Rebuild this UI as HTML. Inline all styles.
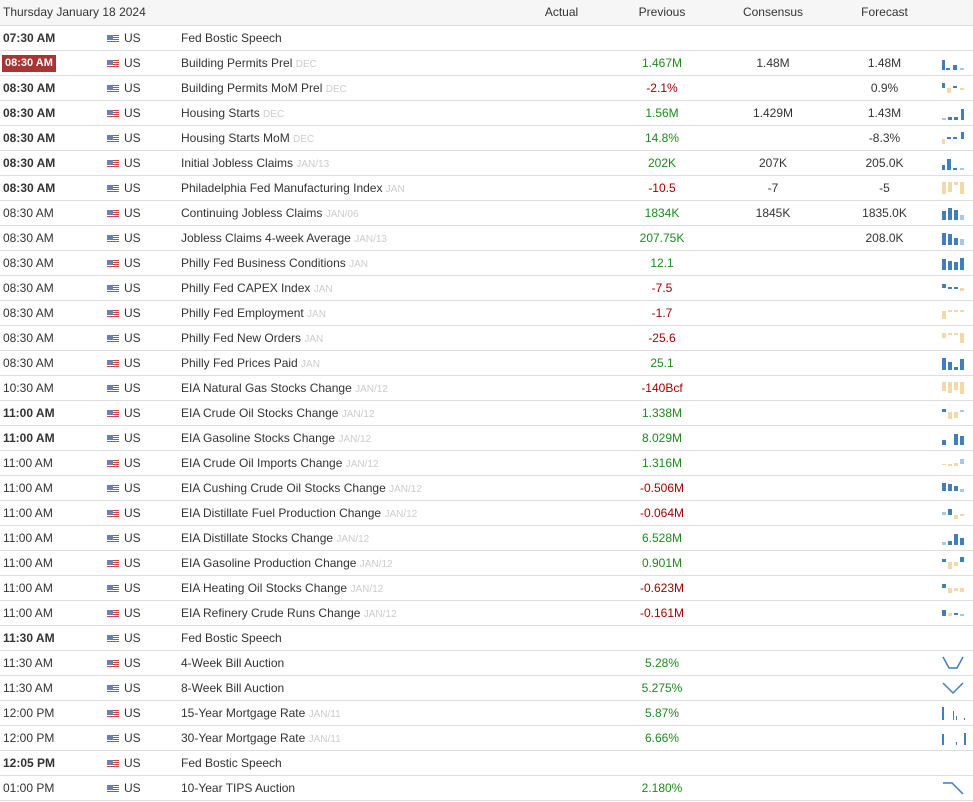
<!DOCTYPE html>
<html><head><style>
body{margin:0;background:#fff;font-family:"Liberation Sans",Arial,sans-serif;font-size:12px;color:#333;width:973px;overflow:hidden}
table{border-collapse:collapse;width:973px;table-layout:fixed}
td{height:24px;padding:0;border-bottom:1px solid #ddd;white-space:nowrap;overflow:hidden}
tr.h td{background:#f6f6f6;color:#333;border-bottom:1px solid #ddd;vertical-align:top;padding-top:5px;height:20px;overflow:visible}
.t{padding-left:3px}
.b{font-weight:bold}
.flag{display:inline-block;width:12px;height:8px;vertical-align:-1px;margin-right:5px;background:repeating-linear-gradient(#c44 0 1px,#fff 1px 2px);position:relative}
.flag:after{content:"";position:absolute;left:0;top:0;width:6px;height:5px;background:#6a7fb6}
.c{text-align:center}
.g{color:#1d8a1d}.r{color:#a30000}
.d{color:#ccc;font-size:10px}
.hl{background:#a33;color:#fff;font-weight:bold;font-size:11px;padding:2px 3px;margin-left:-1px;display:inline-block;line-height:13px}
svg{display:block;margin-left:7px}
</style></head><body>
<table>
<colgroup><col style="width:107px"><col style="width:74px"><col style="width:330px"><col style="width:101px"><col style="width:100px"><col style="width:122px"><col style="width:101px"><col style="width:38px"></colgroup>
<tr class="h"><td class="t">Thursday January 18 2024</td><td></td><td></td><td class="c">Actual</td><td class="c">Previous</td><td class="c">Consensus</td><td class="c">Forecast</td><td></td></tr>
<tr><td class="t b">07:30 AM</td><td><span class="flag"></span>US</td><td>Fed Bostic Speech</td><td></td><td></td><td></td><td></td><td></td></tr>
<tr><td class="t"><span class="hl">08:30 AM</span></td><td><span class="flag"></span>US</td><td>Building Permits Prel <span class="d">DEC</span></td><td></td><td class="c g">1.467M</td><td class="c">1.48M</td><td class="c">1.48M</td><td><svg width="24" height="14"><rect x="0" y="4" width="3" height="10" fill="#3f7fbf"/><rect x="4" y="12" width="4" height="2" fill="#3f7fbf"/><rect x="11" y="9" width="4" height="5" fill="#3f7fbf"/><rect x="18" y="12" width="4" height="2" fill="#aac7e6"/></svg></td></tr>
<tr><td class="t b">08:30 AM</td><td><span class="flag"></span>US</td><td>Building Permits MoM Prel <span class="d">DEC</span></td><td></td><td class="c r">-2.1%</td><td></td><td class="c">0.9%</td><td><svg width="24" height="14"><rect x="0" y="2" width="3" height="5" fill="#3f7fbf"/><rect x="5" y="7" width="4" height="5" fill="#f5d8a8"/><rect x="11" y="5" width="4" height="2" fill="#3f7fbf"/><rect x="18" y="7" width="4" height="2" fill="#f5d8a8"/></svg></td></tr>
<tr><td class="t b">08:30 AM</td><td><span class="flag"></span>US</td><td>Housing Starts <span class="d">DEC</span></td><td></td><td class="c g">1.56M</td><td class="c">1.429M</td><td class="c">1.43M</td><td><svg width="24" height="14"><rect x="0" y="12" width="4" height="2" fill="#aac7e6"/><rect x="6" y="11" width="4" height="3" fill="#3f7fbf"/><rect x="12" y="11" width="4" height="3" fill="#3f7fbf"/><rect x="19" y="3" width="3" height="11" fill="#3f7fbf"/></svg></td></tr>
<tr><td class="t b">08:30 AM</td><td><span class="flag"></span>US</td><td>Housing Starts MoM <span class="d">DEC</span></td><td></td><td class="c g">14.8%</td><td></td><td class="c">-8.3%</td><td><svg width="24" height="14"><rect x="0" y="8" width="3" height="5" fill="#f5d8a8"/><rect x="5" y="6" width="4" height="2" fill="#3f7fbf"/><rect x="11" y="6" width="4" height="2" fill="#3f7fbf"/><rect x="19" y="1" width="3" height="7" fill="#3f7fbf"/></svg></td></tr>
<tr><td class="t b">08:30 AM</td><td><span class="flag"></span>US</td><td>Initial Jobless Claims <span class="d">JAN/13</span></td><td></td><td class="c g">202K</td><td class="c">207K</td><td class="c">205.0K</td><td><svg width="24" height="14"><rect x="0" y="9" width="3" height="5" fill="#3f7fbf"/><rect x="5" y="3" width="4" height="11" fill="#3f7fbf"/><rect x="11" y="12" width="4" height="2" fill="#3f7fbf"/><rect x="18" y="12" width="4" height="2" fill="#aac7e6"/></svg></td></tr>
<tr><td class="t b">08:30 AM</td><td><span class="flag"></span>US</td><td>Philadelphia Fed Manufacturing Index <span class="d">JAN</span></td><td></td><td class="c r">-10.5</td><td class="c">-7</td><td class="c">-5</td><td><svg width="24" height="14"><rect x="0" y="1" width="4" height="12" fill="#f5d8a8"/><rect x="6" y="1" width="4" height="10" fill="#f5d8a8"/><rect x="12" y="1" width="4" height="3" fill="#f5d8a8"/><rect x="18" y="1" width="4" height="12" fill="#f5d8a8"/></svg></td></tr>
<tr><td class="t">08:30 AM</td><td><span class="flag"></span>US</td><td>Continuing Jobless Claims <span class="d">JAN/06</span></td><td></td><td class="c g">1834K</td><td class="c">1845K</td><td class="c">1835.0K</td><td><svg width="24" height="14"><rect x="0" y="5" width="4" height="9" fill="#3f7fbf"/><rect x="6" y="2" width="4" height="12" fill="#3f7fbf"/><rect x="12" y="4" width="4" height="10" fill="#3f7fbf"/><rect x="18" y="9" width="4" height="5" fill="#aac7e6"/></svg></td></tr>
<tr><td class="t">08:30 AM</td><td><span class="flag"></span>US</td><td>Jobless Claims 4-week Average <span class="d">JAN/13</span></td><td></td><td class="c g">207.75K</td><td></td><td class="c">208.0K</td><td><svg width="24" height="14"><rect x="0" y="2" width="4" height="12" fill="#3f7fbf"/><rect x="6" y="3" width="4" height="11" fill="#3f7fbf"/><rect x="12" y="7" width="4" height="7" fill="#3f7fbf"/><rect x="18" y="8" width="4" height="6" fill="#aac7e6"/></svg></td></tr>
<tr><td class="t">08:30 AM</td><td><span class="flag"></span>US</td><td>Philly Fed Business Conditions <span class="d">JAN</span></td><td></td><td class="c g">12.1</td><td></td><td></td><td><svg width="24" height="14"><rect x="0" y="3" width="4" height="11" fill="#3f7fbf"/><rect x="6" y="5" width="4" height="9" fill="#3f7fbf"/><rect x="12" y="6" width="4" height="8" fill="#3f7fbf"/><rect x="18" y="2" width="4" height="12" fill="#3f7fbf"/></svg></td></tr>
<tr><td class="t">08:30 AM</td><td><span class="flag"></span>US</td><td>Philly Fed CAPEX Index <span class="d">JAN</span></td><td></td><td class="c r">-7.5</td><td></td><td></td><td><svg width="24" height="14"><rect x="0" y="3" width="4" height="4" fill="#3f7fbf"/><rect x="6" y="6" width="4" height="2" fill="#3f7fbf"/><rect x="12" y="6" width="4" height="2" fill="#3f7fbf"/><rect x="18" y="7" width="4" height="3" fill="#f5d8a8"/></svg></td></tr>
<tr><td class="t">08:30 AM</td><td><span class="flag"></span>US</td><td>Philly Fed Employment <span class="d">JAN</span></td><td></td><td class="c r">-1.7</td><td></td><td></td><td><svg width="24" height="14"><rect x="0" y="5" width="4" height="8" fill="#f5d8a8"/><rect x="6" y="4" width="4" height="2" fill="#f5d8a8"/><rect x="12" y="4" width="4" height="2" fill="#f5d8a8"/><rect x="18" y="4" width="4" height="2" fill="#f5d8a8"/></svg></td></tr>
<tr><td class="t">08:30 AM</td><td><span class="flag"></span>US</td><td>Philly Fed New Orders <span class="d">JAN</span></td><td></td><td class="c r">-25.6</td><td></td><td></td><td><svg width="24" height="14"><rect x="0" y="2" width="4" height="5" fill="#f5d8a8"/><rect x="6" y="2" width="4" height="2" fill="#f5d8a8"/><rect x="12" y="2" width="4" height="2" fill="#f5d8a8"/><rect x="18" y="2" width="4" height="10" fill="#f5d8a8"/></svg></td></tr>
<tr><td class="t">08:30 AM</td><td><span class="flag"></span>US</td><td>Philly Fed Prices Paid <span class="d">JAN</span></td><td></td><td class="c g">25.1</td><td></td><td></td><td><svg width="24" height="14"><rect x="0" y="2" width="4" height="12" fill="#3f7fbf"/><rect x="6" y="6" width="4" height="8" fill="#3f7fbf"/><rect x="12" y="11" width="4" height="3" fill="#3f7fbf"/><rect x="18" y="3" width="4" height="11" fill="#3f7fbf"/></svg></td></tr>
<tr><td class="t">10:30 AM</td><td><span class="flag"></span>US</td><td>EIA Natural Gas Stocks Change <span class="d">JAN/12</span></td><td></td><td class="c r">-140Bcf</td><td></td><td></td><td><svg width="24" height="14"><rect x="0" y="1" width="4" height="9" fill="#f5d8a8"/><rect x="6" y="1" width="4" height="11" fill="#f5d8a8"/><rect x="12" y="1" width="4" height="8" fill="#f5d8a8"/><rect x="18" y="1" width="4" height="12" fill="#f5d8a8"/></svg></td></tr>
<tr><td class="t b">11:00 AM</td><td><span class="flag"></span>US</td><td>EIA Crude Oil Stocks Change <span class="d">JAN/12</span></td><td></td><td class="c g">1.338M</td><td></td><td></td><td><svg width="24" height="14"><rect x="0" y="3" width="4" height="3" fill="#3f7fbf"/><rect x="6" y="6" width="4" height="7" fill="#f5d8a8"/><rect x="12" y="6" width="4" height="6" fill="#f5d8a8"/><rect x="18" y="4" width="4" height="2" fill="#aac7e6"/></svg></td></tr>
<tr><td class="t b">11:00 AM</td><td><span class="flag"></span>US</td><td>EIA Gasoline Stocks Change <span class="d">JAN/12</span></td><td></td><td class="c g">8.029M</td><td></td><td></td><td><svg width="24" height="14"><rect x="0" y="9" width="4" height="5" fill="#3f7fbf"/><rect x="12" y="3" width="4" height="11" fill="#3f7fbf"/><rect x="18" y="5" width="4" height="9" fill="#3f7fbf"/></svg></td></tr>
<tr><td class="t">11:00 AM</td><td><span class="flag"></span>US</td><td>EIA Crude Oil Imports Change <span class="d">JAN/12</span></td><td></td><td class="c g">1.316M</td><td></td><td></td><td><svg width="24" height="14"><rect x="0" y="8" width="4" height="1" fill="#f5d8a8"/><rect x="6" y="8" width="4" height="2" fill="#f5d8a8"/><rect x="12" y="7" width="4" height="3" fill="#f5d8a8"/><rect x="18" y="3" width="4" height="5" fill="#aac7e6"/></svg></td></tr>
<tr><td class="t">11:00 AM</td><td><span class="flag"></span>US</td><td>EIA Cushing Crude Oil Stocks Change <span class="d">JAN/12</span></td><td></td><td class="c r">-0.506M</td><td></td><td></td><td><svg width="24" height="14"><rect x="0" y="2" width="4" height="8" fill="#3f7fbf"/><rect x="6" y="3" width="4" height="7" fill="#3f7fbf"/><rect x="12" y="5" width="4" height="5" fill="#3f7fbf"/><rect x="18" y="8" width="4" height="3" fill="#aac7e6"/></svg></td></tr>
<tr><td class="t">11:00 AM</td><td><span class="flag"></span>US</td><td>EIA Distillate Fuel Production Change <span class="d">JAN/12</span></td><td></td><td class="c r">-0.064M</td><td></td><td></td><td><svg width="24" height="14"><rect x="0" y="6" width="4" height="3" fill="#aac7e6"/><rect x="6" y="3" width="4" height="6" fill="#3f7fbf"/><rect x="12" y="9" width="4" height="4" fill="#f5d8a8"/><rect x="18" y="8" width="4" height="2" fill="#f5d8a8"/></svg></td></tr>
<tr><td class="t">11:00 AM</td><td><span class="flag"></span>US</td><td>EIA Distillate Stocks Change <span class="d">JAN/12</span></td><td></td><td class="c g">6.528M</td><td></td><td></td><td><svg width="24" height="14"><rect x="0" y="11" width="4" height="3" fill="#aac7e6"/><rect x="6" y="10" width="4" height="4" fill="#3f7fbf"/><rect x="12" y="3" width="4" height="11" fill="#3f7fbf"/><rect x="18" y="7" width="4" height="7" fill="#3f7fbf"/></svg></td></tr>
<tr><td class="t">11:00 AM</td><td><span class="flag"></span>US</td><td>EIA Gasoline Production Change <span class="d">JAN/12</span></td><td></td><td class="c g">0.901M</td><td></td><td></td><td><svg width="24" height="14"><rect x="0" y="3" width="4" height="3" fill="#3f7fbf"/><rect x="6" y="6" width="4" height="7" fill="#f5d8a8"/><rect x="12" y="6" width="4" height="4" fill="#f5d8a8"/><rect x="18" y="1" width="4" height="5" fill="#3f7fbf"/></svg></td></tr>
<tr><td class="t">11:00 AM</td><td><span class="flag"></span>US</td><td>EIA Heating Oil Stocks Change <span class="d">JAN/12</span></td><td></td><td class="c r">-0.623M</td><td></td><td></td><td><svg width="24" height="14"><rect x="0" y="3" width="4" height="4" fill="#3f7fbf"/><rect x="6" y="7" width="4" height="5" fill="#f5d8a8"/><rect x="12" y="7" width="4" height="3" fill="#f5d8a8"/><rect x="18" y="7" width="4" height="4" fill="#f5d8a8"/></svg></td></tr>
<tr><td class="t">11:00 AM</td><td><span class="flag"></span>US</td><td>EIA Refinery Crude Runs Change <span class="d">JAN/12</span></td><td></td><td class="c r">-0.161M</td><td></td><td></td><td><svg width="24" height="14"><rect x="0" y="4" width="4" height="6" fill="#3f7fbf"/><rect x="6" y="7" width="4" height="3" fill="#f5d8a8"/><rect x="12" y="7" width="4" height="2" fill="#3f7fbf"/><rect x="18" y="8" width="4" height="2" fill="#aac7e6"/></svg></td></tr>
<tr><td class="t b">11:30 AM</td><td><span class="flag"></span>US</td><td>Fed Bostic Speech</td><td></td><td></td><td></td><td></td><td></td></tr>
<tr><td class="t">11:30 AM</td><td><span class="flag"></span>US</td><td>4-Week Bill Auction</td><td></td><td class="c g">5.28%</td><td></td><td></td><td><svg width="24" height="14"><polyline points="1,1 7,12 15,12 21,1" fill="none" stroke="#3f7fbf" stroke-width="1.5"/></svg></td></tr>
<tr><td class="t">11:30 AM</td><td><span class="flag"></span>US</td><td>8-Week Bill Auction</td><td></td><td class="c g">5.275%</td><td></td><td></td><td><svg width="24" height="14"><polyline points="1,2 11,12 21,2" fill="none" stroke="#3f7fbf" stroke-width="1.5"/></svg></td></tr>
<tr><td class="t">12:00 PM</td><td><span class="flag"></span>US</td><td>15-Year Mortgage Rate <span class="d">JAN/11</span></td><td></td><td class="c g">5.87%</td><td></td><td></td><td><svg width="24" height="14"><rect x="0" y="1" width="2" height="13" fill="#3f7fbf"/><rect x="11" y="5" width="1" height="9" fill="#3f7fbf"/><rect x="14" y="10" width="1" height="4" fill="#3f7fbf"/><rect x="22" y="12" width="1" height="2" fill="#3f7fbf"/></svg></td></tr>
<tr><td class="t">12:00 PM</td><td><span class="flag"></span>US</td><td>30-Year Mortgage Rate <span class="d">JAN/11</span></td><td></td><td class="c g">6.66%</td><td></td><td></td><td><svg width="24" height="14"><rect x="0" y="3" width="2" height="11" fill="#3f7fbf"/><rect x="14" y="11" width="1" height="3" fill="#3f7fbf"/><rect x="22" y="2" width="2" height="12" fill="#3f7fbf"/></svg></td></tr>
<tr><td class="t b">12:05 PM</td><td><span class="flag"></span>US</td><td>Fed Bostic Speech</td><td></td><td></td><td></td><td></td><td></td></tr>
<tr><td class="t">01:00 PM</td><td><span class="flag"></span>US</td><td>10-Year TIPS Auction</td><td></td><td class="c g">2.180%</td><td></td><td></td><td><svg width="24" height="14"><polyline points="1,2 10,2 21,13" fill="none" stroke="#3f7fbf" stroke-width="1.5"/></svg></td></tr>
</table>
</body></html>
